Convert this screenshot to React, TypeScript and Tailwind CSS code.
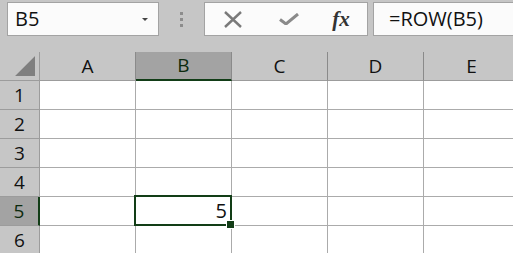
// Spreadsheet view: name box + formula bar on top, a 5x6 grid with B5 selected.

const COLS = ["A", "B", "C", "D", "E"];
const ROWS = [1, 2, 3, 4, 5, 6];
const SEL_COL = "B";
const SEL_ROW = 5;

function Toolbar() {
  return (
    <div className="flex h-[52px] items-start bg-[#c6c6c6] pl-[7px] pt-[2px]">
      <div className="flex h-[34px] w-[152px] shrink-0 items-center justify-between border border-[#a3a3a3] bg-[#fbfbfb] pl-[7px] pr-[10px] text-[20px] text-[#111]">
        <span>B5</span>
        <svg width="6" height="3" viewBox="0 0 6 3">
          <path d="M0 0h6L3 3z" fill="#444" />
        </svg>
      </div>

      <div className="flex h-[34px] w-[45px] shrink-0 flex-col items-center justify-center gap-[3px]">
        <span className="h-[3px] w-[3px] bg-[#8c8c8c]" />
        <span className="h-[3px] w-[3px] bg-[#8c8c8c]" />
        <span className="h-[3px] w-[3px] bg-[#8c8c8c]" />
      </div>

      <div className="flex h-[34px] w-[164px] shrink-0 items-center border border-[#a3a3a3] bg-[#fbfbfb]">
        <div className="flex w-[55px] justify-center pl-[1px]">
          <svg width="18" height="17" viewBox="0 0 18 17">
            <path d="M1 1l16 15M17 1L1 16" stroke="#7a7a7a" strokeWidth="2.4" fill="none" />
          </svg>
        </div>
        <div className="flex w-[55px] justify-center pl-[2px]">
          <svg width="20" height="12" viewBox="0 0 20 12">
            <path d="M1 6.5l6 4.5L19 1" stroke="#8a8a8a" strokeWidth="3" fill="none" />
          </svg>
        </div>
        <div className="flex w-[52px] justify-center">
          <span className="font-['Liberation_Serif',serif] text-[21px] font-bold italic leading-none text-[#333]">
            fx
          </span>
        </div>
      </div>

      <div className="ml-[5px] flex h-[34px] w-[150px] shrink-0 items-center border border-[#a3a3a3] bg-[#fbfbfb] pl-[15px] text-[20px] text-[#111]">
        =ROW(B5)
      </div>
    </div>
  );
}

function Sheet() {
  return (
    <div className="relative">
      <div className="flex">
        <div className="relative h-[29px] w-[40px] shrink-0 border-b border-r border-[#9c9c9c] bg-[#c6c6c6]">
          <svg className="absolute left-[15px] top-[4px]" width="21" height="21" viewBox="0 0 21 21">
            <path d="M20 0V20H0z" fill="#7f7f7f" />
            <path d="M20 0L0 20" stroke="#a8a8a8" strokeWidth="1" />
          </svg>
        </div>
        {COLS.map((c) => (
          <div
            key={c}
            className={
              c === SEL_COL
                ? "flex h-[29px] w-[96px] shrink-0 items-center justify-center border-b-2 border-r border-b-[#123d17] border-r-[#8a8a8a] bg-[#a3a3a3] text-[19px] text-[#0c2a0e]"
                : "flex h-[29px] w-[96px] shrink-0 items-center justify-center border-b border-r border-b-[#9c9c9c] border-r-[#8a8a8a] bg-[#c6c6c6] text-[19px] text-[#111]"
            }
          >
            {c}
          </div>
        ))}
      </div>

      {ROWS.map((r) => (
        <div key={r} className="flex">
          <div
            className={
              r === SEL_ROW
                ? "flex h-[29px] w-[40px] shrink-0 items-center justify-center border-b border-r-2 border-b-[#9c9c9c] border-r-[#123d17] bg-[#a3a3a3] text-[19px] text-[#0c2a0e]"
                : "flex h-[29px] w-[40px] shrink-0 items-center justify-center border-b border-r border-[#9c9c9c] bg-[#c6c6c6] text-[19px] text-[#111]"
            }
          >
            {r}
          </div>
          {COLS.map((c) => (
            <div
              key={c}
              className="flex h-[29px] w-[96px] shrink-0 items-center justify-end border-b border-r border-[#ababab] bg-white pr-[4px] text-[20px] text-[#111]"
            >
              {c === SEL_COL && r === SEL_ROW ? "5" : ""}
            </div>
          ))}
        </div>
      ))}

      <div className="absolute left-[134px] top-[143px] h-[31px] w-[98px] border-2 border-[#123d17]" />
      <div className="absolute left-[227px] top-[169px] h-[7px] w-[7px] bg-[#123d17] outline outline-1 outline-white" />
    </div>
  );
}

export default function App() {
  return (
    <div className="h-[253px] w-[513px] overflow-hidden bg-white font-['Open_Sans',sans-serif]">
      <Toolbar />
      <Sheet />
    </div>
  );
}
